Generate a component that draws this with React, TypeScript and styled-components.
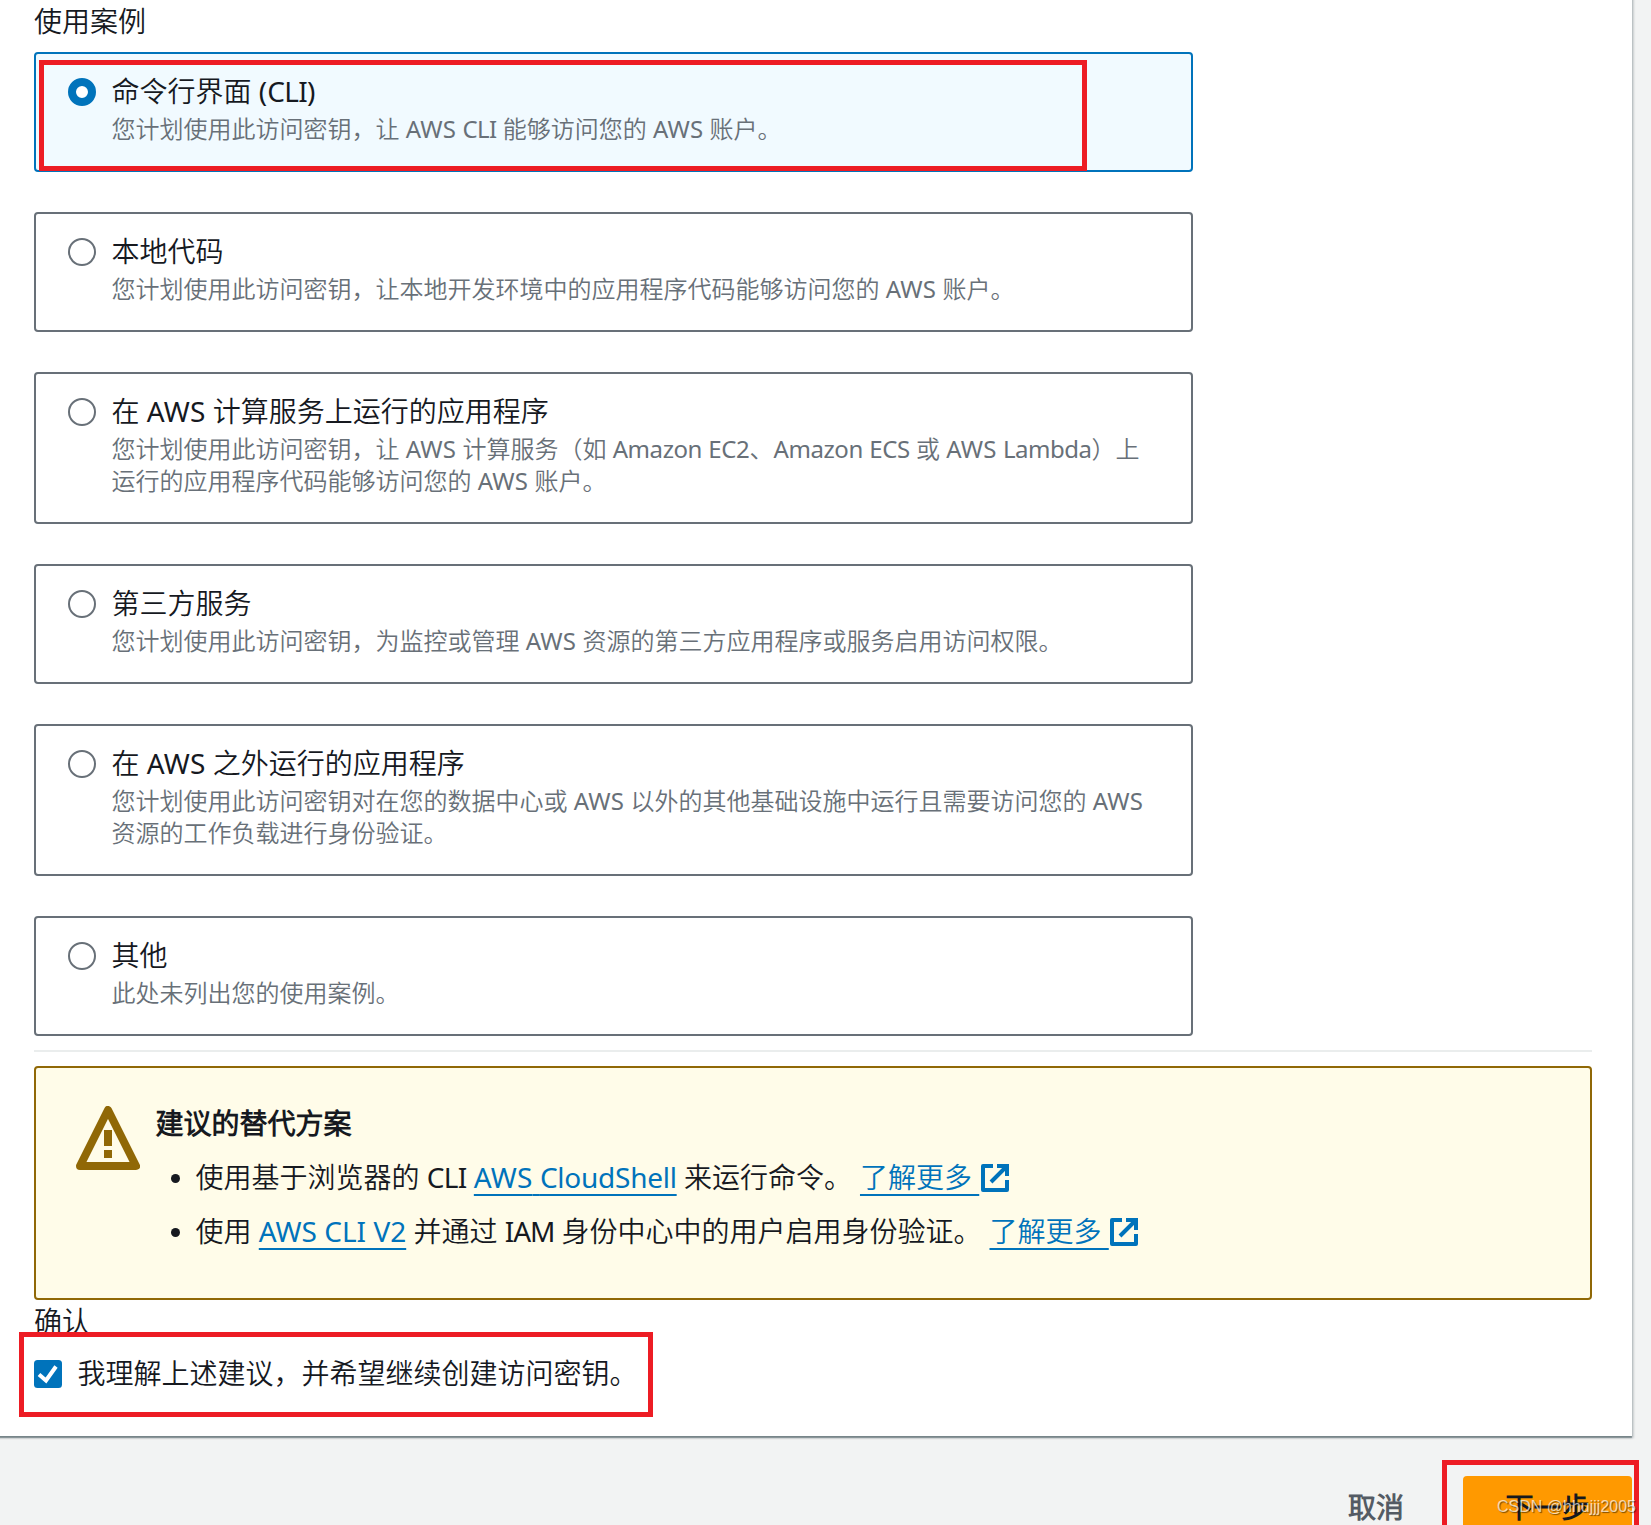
import React from "react";
import styled, { createGlobalStyle } from "styled-components";

const GlobalStyle = createGlobalStyle`
  html, body { margin: 0; padding: 0; background: #f2f3f3; overflow: hidden; }
  *, *::before, *::after { box-sizing: border-box; }
`;

const Page = styled.div`
  position: relative;
  display: flex;
  flex-direction: column;
  height: 1525px;
  overflow: hidden;
  background: #f2f3f3;
  color: #16191f;
  font-family: "Noto Sans", "Noto Sans CJK SC DemiLight", "Noto Sans CJK SC", sans-serif;
  font-size: 28px;
  line-height: 44px;
`;

const Card = styled.main`
  flex: none;
  width: 1642px;
  height: 1456px;
  margin: -20px 0 0 -10px;
  padding: 19px 40px 0 44px;
  background: #fff;
  box-shadow: 0 2px 2px 0 rgba(0, 28, 36, 0.3), 2px 2px 2px 0 rgba(0, 28, 36, 0.15),
    0 2px 0 0 rgba(0, 28, 36, 0.2);
`;

const FieldLabel = styled.div`
  height: 53px;
`;

const ConfirmLabel = styled.div`
  height: 52px;
  margin-top: -1px;
`;

const Tiles = styled.div`
  display: flex;
  flex-direction: column;
  gap: 40px;
  width: 1159px;
`;

const Tile = styled.label<{ $selected?: boolean }>`
  display: flex;
  gap: 15.5px;
  padding: 15px 32px 25px;
  border: 2px solid ${(p) => (p.$selected ? "#0073bb" : "#687078")};
  border-radius: 4px;
  background: ${(p) => (p.$selected ? "#f1faff" : "#fff")};
`;

const Radio = styled.span<{ $selected?: boolean }>`
  flex: none;
  width: 28px;
  height: 28px;
  margin-top: 9px;
  border: ${(p) => (p.$selected ? "8px solid #0073bb" : "2px solid #687078")};
  border-radius: 50%;
  background: #fff;
`;

const TileBody = styled.div`
  display: flex;
  flex-direction: column;
`;

const TileTitle = styled.div`
  height: 44px;
`;

const TileText = styled.div`
  color: #687078;
  font-size: 24px;
  line-height: 32px;
  white-space: nowrap;
`;

const Word = styled.span<{ $tracking: number }>`
  letter-spacing: ${(p) => p.$tracking}em;
`;

const Divider = styled.hr`
  height: 2px;
  margin: 14px 0;
  border: 0;
  background: #eaeded;
`;

const Alert = styled.section`
  display: flex;
  gap: 15.5px;
  height: 234px;
  padding: 33px 40px;
  border: 2px solid #906806;
  border-radius: 4px;
  background: #fffce9;
`;

const Warning = styled.svg`
  flex: none;
  width: 64px;
  height: 64px;
  margin-top: 5px;
`;

const AlertTitle = styled.div`
  font-weight: 700;
`;

const AlertList = styled.ul`
  display: flex;
  flex-direction: column;
  gap: 10px;
  margin: 10px 0 0;
  padding: 0 0 0 15px;
  list-style: none;
  white-space: nowrap;
`;

const AlertItem = styled.li`
  height: 44px;

  &::before {
    content: "";
    display: inline-block;
    width: 9px;
    height: 9px;
    margin-right: 16px;
    border-radius: 50%;
    background: #16191f;
    vertical-align: 5px;
  }
`;

const Link = styled.a`
  color: #0073bb;
  text-decoration: underline;
  text-decoration-thickness: 2px;
  text-decoration-skip-ink: none;
  text-underline-offset: 6px;
`;

const MoreLink = styled.span`
  margin-left: 8px;
`;

const External = styled.svg`
  width: 28px;
  height: 28px;
  margin-left: 1.5px;
  vertical-align: -4px;
`;

const Confirm = styled.label`
  display: flex;
  align-items: flex-start;
  gap: 15.5px;
  height: 44px;
`;

const Checkbox = styled.svg`
  width: 28px;
  height: 28px;
  margin-top: 9px;
`;

const Actions = styled.footer`
  display: flex;
  justify-content: flex-end;
  align-items: flex-start;
  gap: 59px;
  padding: 40px 19px 0 0;
  font-weight: 700;
`;

const Cancel = styled.button`
  height: 62px;
  padding: 0;
  border: 0;
  background: none;
  color: #545b64;
  font: inherit;
`;

const Next = styled.button`
  width: 169px;
  height: 62px;
  padding: 0;
  border: 0;
  border-radius: 4px;
  background: #ff9900;
  color: #16191f;
  font: inherit;
`;

const Highlight = styled.div<{ $x: number; $y: number; $w: number; $h: number }>`
  position: absolute;
  left: ${(p) => p.$x}px;
  top: ${(p) => p.$y}px;
  width: ${(p) => p.$w}px;
  height: ${(p) => p.$h}px;
  border: 5px solid #ed1c24;
`;

const Watermark = styled.div`
  position: absolute;
  left: 1497px;
  top: 1497px;
  color: rgba(255, 255, 255, 0.7);
  font: 16px/20px "Liberation Sans", sans-serif;
  text-shadow: 1px 1px 1px rgba(0, 0, 0, 0.5);
  white-space: nowrap;
`;

const tracking: Record<string, number> = {
  AWS: 0.007,
  CLI: -0.025,
  IAM: -0.04,
  Amazon: -0.017,
  EC2: -0.015,
  ECS: -0.015,
  Lambda: -0.02,
  CloudShell: -0.009,
};

function Mixed({ children }: { children: string }) {
  return (
    <>
      {children.split(/([A-Za-z0-9]+)/).map((part, i) =>
        tracking[part] === undefined ? (
          part
        ) : (
          <Word key={i} $tracking={tracking[part]}>
            {part}
          </Word>
        ),
      )}
    </>
  );
}

const cases: { title: string; text: string[] }[] = [
  { title: "命令行界面 (CLI)", text: ["您计划使用此访问密钥，让 AWS CLI 能够访问您的 AWS 账户。"] },
  { title: "本地代码", text: ["您计划使用此访问密钥，让本地开发环境中的应用程序代码能够访问您的 AWS 账户。"] },
  {
    title: "在 AWS 计算服务上运行的应用程序",
    text: [
      "您计划使用此访问密钥，让 AWS 计算服务（如 Amazon EC2、Amazon ECS 或 AWS Lambda）上",
      "运行的应用程序代码能够访问您的 AWS 账户。",
    ],
  },
  { title: "第三方服务", text: ["您计划使用此访问密钥，为监控或管理 AWS 资源的第三方应用程序或服务启用访问权限。"] },
  {
    title: "在 AWS 之外运行的应用程序",
    text: [
      "您计划使用此访问密钥对在您的数据中心或 AWS 以外的其他基础设施中运行且需要访问您的 AWS",
      "资源的工作负载进行身份验证。",
    ],
  },
  { title: "其他", text: ["此处未列出您的使用案例。"] },
];

function LearnMore() {
  return (
    <MoreLink>
      <Link>了解更多&nbsp;</Link>
      <External viewBox="0 0 28 28" fill="none" stroke="#0073bb" strokeWidth="4">
        <path d="M12 2H2v24h24V16" strokeLinejoin="round" />
        <path d="M16 2h10v10M26 2 10 18" />
      </External>
    </MoreLink>
  );
}

export default function App() {
  return (
    <Page lang="zh-CN">
      <GlobalStyle />
      <Card>
        <FieldLabel>使用案例</FieldLabel>
        <Tiles>
          {cases.map((c, i) => (
            <Tile key={c.title} $selected={i === 0}>
              <Radio $selected={i === 0} />
              <TileBody>
                <TileTitle>
                  <Mixed>{c.title}</Mixed>
                </TileTitle>
                {c.text.map((t) => (
                  <TileText key={t}>
                    <Mixed>{t}</Mixed>
                  </TileText>
                ))}
              </TileBody>
            </Tile>
          ))}
        </Tiles>
        <Divider />
        <Alert>
          <Warning viewBox="0 0 16 16" fill="none" stroke="#906806" strokeWidth="2">
            <path d="M8 1 15 15H1z" strokeLinejoin="round" />
            <path d="M8 6v4M8 11v2" />
          </Warning>
          <div>
            <AlertTitle>建议的替代方案</AlertTitle>
            <AlertList>
              <AlertItem>
                <Mixed>使用基于浏览器的 CLI </Mixed>
                <Link>
                  <Mixed>AWS CloudShell</Mixed>
                </Link>{" "}
                来运行命令。
                <LearnMore />
              </AlertItem>
              <AlertItem>
                使用 <Link>AWS CLI V2</Link>
                <Mixed> 并通过 IAM 身份中心中的用户启用身份验证。</Mixed>
                <LearnMore />
              </AlertItem>
            </AlertList>
          </div>
        </Alert>
        <ConfirmLabel>确认</ConfirmLabel>
        <Confirm>
          <Checkbox viewBox="0 0 28 28">
            <rect width="28" height="28" rx="3.5" fill="#0073bb" />
            <path d="M5 14.5l7 6L22 6.5" fill="none" stroke="#fff" strokeWidth="4" />
          </Checkbox>
          我理解上述建议，并希望继续创建访问密钥。
        </Confirm>
      </Card>
      <Actions>
        <Cancel>取消</Cancel>
        <Next>下一步</Next>
      </Actions>
      <Highlight $x={39} $y={60} $w={1048} $h={111} />
      <Highlight $x={19} $y={1332} $w={634} $h={85} />
      <Highlight $x={1442} $y={1460} $w={197} $h={85} />
      <Watermark>CSDN @hhujjj2005</Watermark>
    </Page>
  );
}
